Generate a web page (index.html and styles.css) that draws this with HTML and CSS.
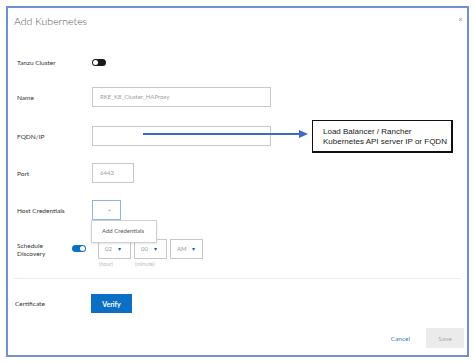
FILE: index.html
```html
<!DOCTYPE html>
<html lang="en">
<head>
    <meta charset="UTF-8">
    <title>Add Kubernetes</title>
    <link rel="stylesheet" href="styles.css">
</head>
<body>
    <div class="dialog">
        <div class="head">
            <div class="title">Add Kubernetes</div>
            <div class="close">&#215;</div>
        </div>
        <div class="form">
            <div class="row first">
                <div class="label">Tanzu Cluster</div>
                <div class="toggle off"><span></span></div>
            </div>
            <div class="row name">
                <div class="label">Name</div>
                <div class="input wide">RKE_K8_Cluster_HAProxy</div>
            </div>
            <div class="row">
                <div class="label">FQDN/IP</div>
                <div class="input wide"></div>
            </div>
            <div class="row">
                <div class="label">Port</div>
                <div class="input short">6443</div>
            </div>
            <div class="row">
                <div class="label">Host Credentials</div>
                <div class="select-wrap">
                    <div class="select focus"><span class="chev">&#8964;</span></div>
                    <div class="menu">Add Credentials</div>
                </div>
            </div>
            <div class="row schedule">
                <div class="label two">Schedule<br>Discovery</div>
                <div class="toggle on"><span></span></div>
                <div class="times">
                    <div class="time">
                        <div class="pick">02 <span class="caret">&#9662;</span></div>
                        <div class="hint">(hour)</div>
                    </div>
                    <div class="time">
                        <div class="pick">00 <span class="caret">&#9662;</span></div>
                        <div class="hint">(minute)</div>
                    </div>
                    <div class="time">
                        <div class="pick">AM <span class="caret">&#9662;</span></div>
                    </div>
                </div>
            </div>
        </div>
        <div class="sep"></div>
        <div class="row cert">
            <div class="label">Certificate</div>
            <div class="verify">Verify</div>
        </div>
        <div class="foot">
            <div class="cancel">Cancel</div>
            <div class="save">Save</div>
        </div>
    </div>

    <svg class="arrow" width="170" height="10" viewBox="0 0 170 10">
        <line x1="0" y1="5" x2="158" y2="5" stroke="#3c6cc0" stroke-width="2"/>
        <polygon points="156,1 165,5 156,9" fill="#3c6cc0"/>
    </svg>
    <div class="callout">Load Balancer / Rancher<br>Kubernetes API server IP or FQDN</div>
</body>
</html>
```

FILE: styles.css
```css
body {
    margin: 0;
    background: white;
    font-family: Lato, "Open Sans", sans-serif;
    color: #333;
}

.dialog {
    margin: 6px;
    width: 459px;
    height: 347px;
    border: 2px solid #6f90d2;
    display: flex;
    flex-direction: column;
}

.head {
    height: 26px;
    display: flex;
    justify-content: space-between;
    align-items: center;
    padding: 0 4px 0 6px;
}

.title {
    font-size: 10.5px;
    font-weight: 300;
    color: #555;
}

.close {
    font-size: 8px;
    color: #999;
    margin-top: -4px;
}

.form {
    padding-left: 9px;
    display: flex;
    flex-direction: column;
    gap: 17px;
}

.row {
    display: flex;
    align-items: center;
    height: 20px;
}

.row.first {
    margin-top: 18px;
}

.row.name {
    margin-top: -2px;
    margin-bottom: 2px;
}

.label {
    width: 75px;
    font-size: 6.5px;
    color: #333;
    flex-shrink: 0;
}

.toggle {
    width: 14px;
    height: 7px;
    border-radius: 4px;
    background: #1a1a1a;
    position: relative;
}

.toggle span {
    position: absolute;
    top: 1px;
    left: 1px;
    width: 5px;
    height: 5px;
    border-radius: 50%;
    background: white;
}

.toggle.on {
    background: #0b72c4;
}

.toggle.on span {
    left: 8px;
}

.input {
    height: 18px;
    border: 1px solid #c8c8c8;
    font-size: 6px;
    color: #a0a0a0;
    line-height: 18px;
    padding-left: 7px;
    box-sizing: content-box;
}

.input.wide {
    width: 170px;
}

.input.short {
    width: 33px;
}

.select-wrap {
    position: relative;
}

.select {
    width: 27px;
    height: 18px;
    border: 1px solid #8fb6e4;
    display: flex;
    justify-content: center;
    align-items: center;
}

.chev {
    font-size: 6px;
    color: #888;
    margin-top: -4px;
    margin-left: 6px;
}

.menu {
    position: absolute;
    top: 20px;
    left: -1px;
    width: 54px;
    height: 21px;
    padding-left: 10px;
    line-height: 20px;
    background: white;
    border: 1px solid #d0d0d0;
    box-shadow: 0 1px 2px rgba(0, 0, 0, 0.1);
    font-size: 6px;
    color: #555;
    z-index: 2;
}

.row.schedule {
    margin-top: 2px;
    height: 30px;
    align-items: flex-start;
}

.label.two {
    width: 55px;
    line-height: 8px;
    padding-top: 3px;
}

.schedule .toggle {
    margin-top: 6px;
}

.times {
    display: flex;
    gap: 3px;
    margin-left: 12px;
}

.time {
    display: flex;
    flex-direction: column;
}

.pick {
    width: 25px;
    height: 18px;
    border: 1px solid #c8c8c8;
    font-size: 6px;
    color: #999;
    line-height: 18px;
    padding-left: 6px;
}

.caret {
    color: #1f5fa8;
    margin-left: 4px;
    font-size: 6px;
}

.hint {
    font-size: 5.5px;
    color: #bbb;
    margin-top: 2px;
    padding-left: 1px;
}

.sep {
    height: 1px;
    background: #ececec;
    margin: 9px 6px 0;
}

.row.cert {
    margin-top: 15px;
    padding-left: 7px;
    height: 19px;
}

.cert .label {
    width: 76px;
}

.verify {
    width: 41px;
    height: 19px;
    background: #0b6fc4;
    color: white;
    font-size: 7px;
    font-weight: bold;
    display: flex;
    justify-content: center;
    align-items: center;
}

.foot {
    margin-top: 15px;
    display: flex;
    justify-content: flex-end;
    align-items: center;
    gap: 16px;
    padding-right: 3px;
}

.cancel {
    font-size: 6.5px;
    color: #3f79c4;
}

.save {
    width: 38px;
    height: 20px;
    background: #ebebeb;
    color: #aaa;
    font-size: 6.5px;
    display: flex;
    justify-content: center;
    align-items: center;
}

.arrow {
    position: absolute;
    left: 143px;
    top: 129px;
}

.callout {
    position: absolute;
    left: 312px;
    top: 120px;
    width: 141px;
    height: 33px;
    padding: 6px 0 0 10px;
    border: 1px solid #111;
    border-right-width: 2px;
    border-bottom-width: 2px;
    background: white;
    font-family: "Liberation Sans", Arial, sans-serif;
    font-size: 8px;
    line-height: 10px;
    color: #222;
    box-sizing: border-box;
}
```
